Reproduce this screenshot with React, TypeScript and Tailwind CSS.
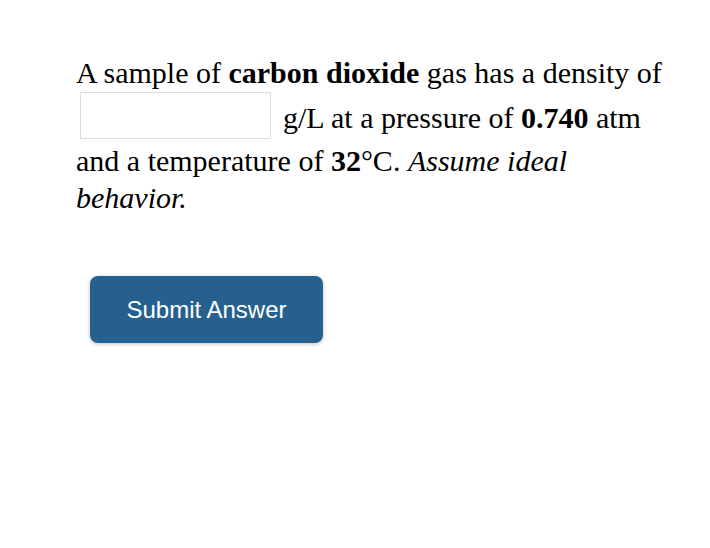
export default function App() {
  return (
    <div className="w-[710px] h-[548px] bg-white">
      <div className="pl-[76px] pt-[54px]">
        <p
          className="text-[30px] leading-[37px] text-black whitespace-nowrap"
          style={{ fontFamily: '"Liberation Serif", "Times New Roman", serif' }}
        >
          A sample of <b>carbon dioxide</b> gas has a density of
          <br />
          <span className="inline-block align-[-14px] mt-[1px] mb-[3px] ml-[4px] mr-[12px] w-[191px] h-[47px] border border-[#dcdcdc] bg-white"></span>
          g/L at a pressure of <b>0.740</b> atm
          <br />
          and a temperature of <b>32</b>°C. <i>Assume ideal</i>
          <br />
          <i>behavior.</i>
        </p>
        <button
          className="mt-[60px] ml-[14px] w-[233px] h-[67px] rounded-[8px] bg-[#26608f] text-white text-[24px] shadow-[0_1px_4px_rgba(0,0,0,0.25)]"
          style={{ fontFamily: '"Liberation Sans", Arial, sans-serif' }}
        >
          Submit Answer
        </button>
      </div>
    </div>
  );
}
